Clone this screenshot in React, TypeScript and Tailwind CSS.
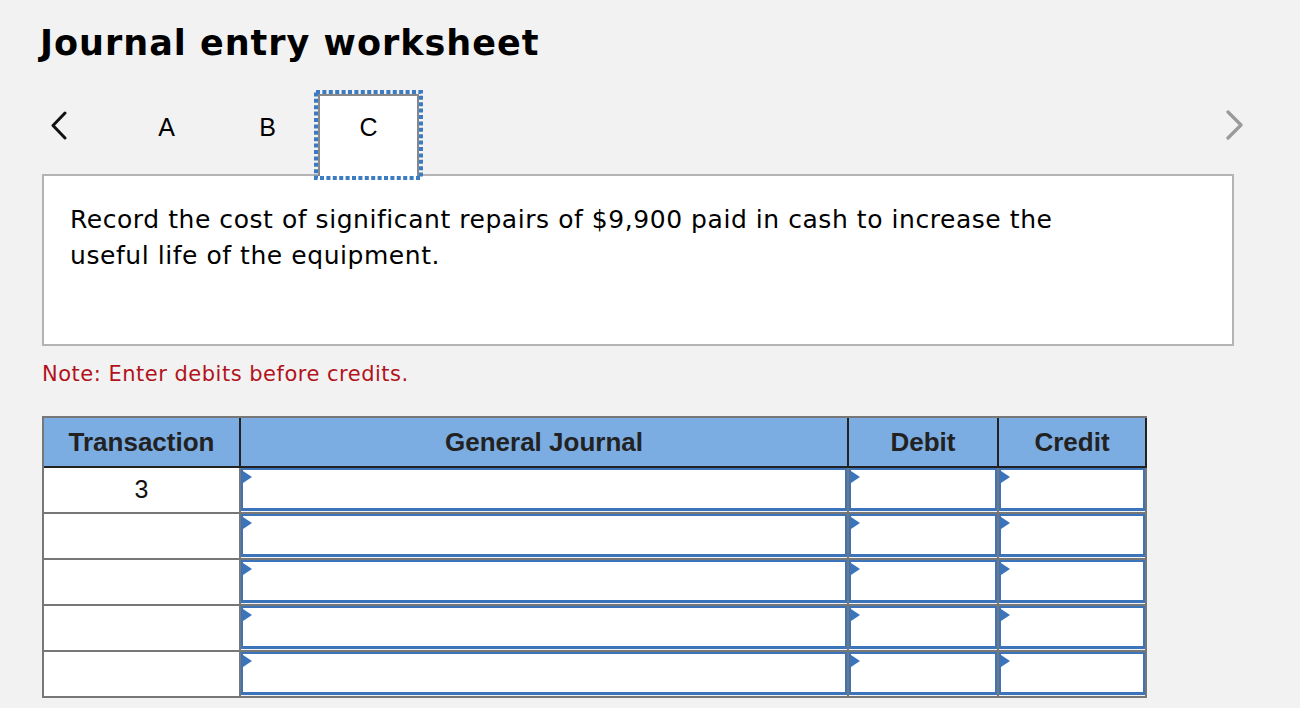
import React from "react";

const rows = ["3", "", "", "", ""];

function Flag() {
  return (
    <span className="absolute left-0 top-[1px] h-0 w-0 border-y-[6px] border-l-[9px] border-y-transparent border-l-[#3b74ba]" />
  );
}

function InputCell() {
  return (
    <div className="h-[46px] border-b-2 border-r-2 border-[#777]">
      <div className="relative h-[43px] border-2 border-b-[3px] border-[#3b74ba] bg-white">
        <Flag />
      </div>
    </div>
  );
}

function HeadCell({ children }: { children: React.ReactNode }) {
  return (
    <div className="flex h-[50px] items-center justify-center border-b-2 border-r-2 border-[#222] bg-[#7badE2] text-[26px] font-bold text-[#222]">
      {children}
    </div>
  );
}

export default function App() {
  return (
    <div className="min-h-[708px] bg-[#f2f2f2] pl-[42px] pt-[23px] [font-family:'DejaVu_Sans',Verdana,sans-serif]">
      <h1 className="-ml-[2px] h-[40px] text-[35px] font-bold leading-[40px] tracking-[1px] text-black">
        Journal entry worksheet
      </h1>

      <div className="mt-[31px] flex h-[82px] items-start [font-family:'Liberation_Sans',Arial,sans-serif]">
        <div className="w-[74px] pt-[17px]">
          <svg width="24" height="30" viewBox="0 0 24 30" className="ml-[4px]">
            <polyline
              points="19,2 7,14.5 19,27"
              fill="none"
              stroke="#111"
              strokeWidth="3"
              strokeLinecap="round"
              strokeLinejoin="round"
            />
          </svg>
        </div>
        <div className="flex h-[82px] w-[101px] justify-center pt-[21px] text-[25px] leading-[25px] text-black">
          A
        </div>
        <div className="flex h-[82px] w-[101px] justify-center pt-[21px] text-[25px] leading-[25px] text-black">
          B
        </div>
        <div className="relative z-10 flex h-[82px] w-[101px] justify-center border-2 border-b-0 border-[#888] bg-white pt-[19px] text-[25px] leading-[25px] text-black">
          C
          <svg
            className="pointer-events-none absolute -left-[6px] -top-[6px]"
            width="109"
            height="90"
            viewBox="0 0 109 90"
          >
            <rect
              x="2"
              y="2"
              width="105"
              height="86"
              fill="none"
              stroke="#3b7bc4"
              strokeWidth="4"
              strokeDasharray="4 2.4"
            />
          </svg>
        </div>
        <div className="flex-1" />
        <div className="mr-[52px] pt-[16px]">
          <svg width="24" height="32" viewBox="0 0 24 32">
            <polyline
              points="4,2 17,15 4,28"
              fill="none"
              stroke="#9a9a9a"
              strokeWidth="3.2"
              strokeLinecap="round"
              strokeLinejoin="round"
            />
          </svg>
        </div>
      </div>

      <div className="-mt-[2px] h-[172px] w-[1192px] border-2 border-[#b3b3b3] bg-white px-[26px] pt-[26px] text-[25px] leading-[36px] tracking-[0.55px] text-black">
        Record the cost of significant repairs of $9,900 paid in cash to increase the
        <br />
        useful life of the equipment.
      </div>

      <p className="mt-[16px] text-[21px] leading-[25px] tracking-[0.5px] text-[#b1121c]">
        Note: Enter debits before credits.
      </p>

      <div className="mt-[29px] grid w-[1105px] grid-cols-[197px_608px_150px_148px] border-l-2 border-t-2 border-[#777] [font-family:'Liberation_Sans',Arial,sans-serif]">
        <HeadCell>Transaction</HeadCell>
        <HeadCell>General Journal</HeadCell>
        <HeadCell>Debit</HeadCell>
        <HeadCell>Credit</HeadCell>
        {rows.map((t, i) => (
          <React.Fragment key={i}>
            <div className="flex h-[46px] items-center justify-center border-b-2 border-r-2 border-[#777] bg-white text-[25px] text-[#111]">
              {t}
            </div>
            <InputCell />
            <InputCell />
            <InputCell />
          </React.Fragment>
        ))}
      </div>
    </div>
  );
}
